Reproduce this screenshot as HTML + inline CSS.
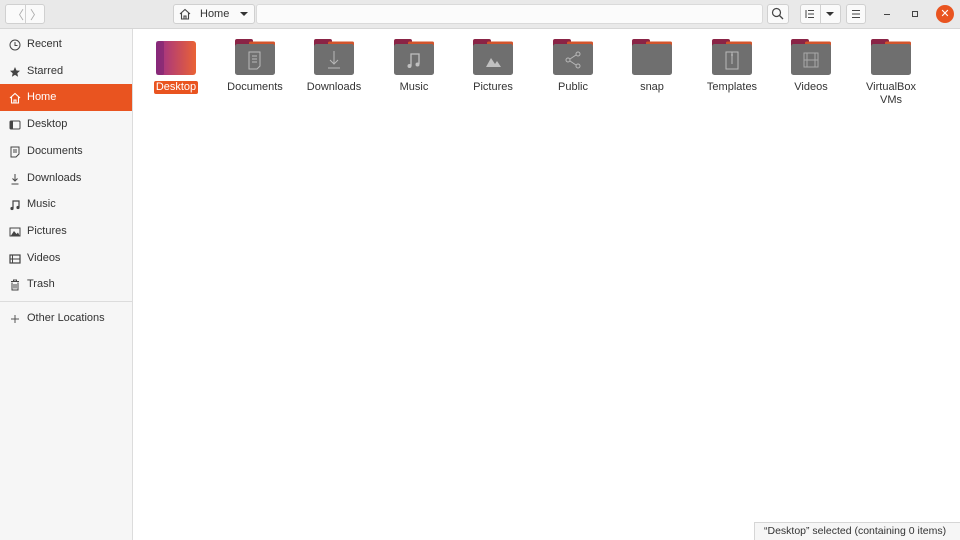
<!DOCTYPE html>
<html><head><style>
*{margin:0;padding:0;box-sizing:border-box}
body{width:960px;height:540px;overflow:hidden;background:#fff;font-family:"Liberation Sans","DejaVu Sans",sans-serif;font-size:11px;color:#333;position:relative}
.hdr{position:absolute;left:0;top:0;width:960px;height:29px;background:#e9e9e9;border-bottom:1px solid #d6d6d6}
.btn{position:absolute;background:#fafafa;border:1px solid #d0d0d0;border-radius:3px}
.side{position:absolute;left:0;top:29px;width:133px;height:511px;background:#f6f6f6;border-right:1px solid #dcdcdc}
.it{position:absolute;left:0;width:132px;height:26px;line-height:27px;padding-left:27px;font-size:11px;color:#333}
.it svg{position:absolute;left:9px;top:8px}
.sel{background:#e95420;color:#fff}
.f{position:absolute;top:38px;width:80px;text-align:center}
.f svg{display:block;margin:0 auto}
.f span{display:inline-block;margin-top:5px;font-size:11px;color:#333;line-height:13px;padding:0 2px}
.status{position:absolute;left:754px;top:522px;width:206px;height:18px;background:#f6f6f6;border:1px solid #d6d6d6;border-right:none;border-bottom:none;font-size:10.5px;line-height:17px;padding-left:9px;color:#333}
</style></head><body>
<div class="hdr">
 <div class="btn" style="left:5px;top:4px;width:40px;height:20px"></div>
 <div style="position:absolute;left:25px;top:4px;width:1px;height:20px;background:#d0d0d0"></div>
 <div style="position:absolute;left:12px;top:6px;color:#aaa;font-size:12px">〈</div>
 <div style="position:absolute;left:30px;top:6px;color:#aaa;font-size:12px">〉</div>
 <div class="btn" style="left:173px;top:4px;width:82px;height:20px"></div>
 <svg style="position:absolute;left:179px;top:8px" width="12" height="12" viewBox="0 0 12 12"><path d="M1 6 L6 1.5 L11 6 M2.5 5 V11 H9.5 V5 M5 11 V8 H7 V11" fill="none" stroke="#444" stroke-width="1.1"/></svg>
 <div style="position:absolute;left:200px;top:8px;font-size:11px;color:#333">Home</div>
 <div style="position:absolute;left:240px;top:12px;border:4px solid transparent;border-top:4px solid #333"></div>
 <div class="btn" style="left:256px;top:4px;width:507px;height:20px;background:#fbfbfb;border-color:#dadada"></div>
 <div class="btn" style="left:767px;top:4px;width:22px;height:20px"></div>
 <svg style="position:absolute;left:771px;top:7px" width="13" height="13" viewBox="0 0 13 13"><circle cx="5.5" cy="5.5" r="4" fill="none" stroke="#444" stroke-width="1.2"/><path d="M8.5 8.5 L12 12" stroke="#444" stroke-width="1.3"/></svg>
 <div class="btn" style="left:800px;top:4px;width:41px;height:20px"></div>
 <div style="position:absolute;left:820px;top:4px;width:1px;height:20px;background:#d0d0d0"></div>
 <svg style="position:absolute;left:805px;top:9px" width="10" height="10" viewBox="0 0 10 10"><path d="M1 1V9 M3 1.5H9 M3 5H9 M3 8.5H9" stroke="#444" stroke-width="1"/></svg>
 <div style="position:absolute;left:826px;top:12px;border:4px solid transparent;border-top:4px solid #333"></div>
 <div class="btn" style="left:846px;top:4px;width:20px;height:20px"></div>
 <svg style="position:absolute;left:851px;top:9px" width="10" height="10" viewBox="0 0 10 10"><path d="M1 1.5H9 M1 5H9 M1 8.5H9" stroke="#444" stroke-width="1"/></svg>
 <div style="position:absolute;left:884px;top:14px;width:6px;height:1px;background:#444"></div>
 <div style="position:absolute;left:912px;top:11px;width:6px;height:6px;border:1px solid #444"></div>
 <div style="position:absolute;left:936px;top:5px;width:18px;height:18px;border-radius:50%;background:#e95420;color:#fff;text-align:center;line-height:18px;font-size:11px">✕</div>
</div>
<div class="side">
 <div class="it" style="top:2px"><svg width="12" height="12" viewBox="0 0 12 12"><circle cx="6" cy="6" r="5" fill="none" stroke="#444"/><path d="M6 3V6.5H8.5" fill="none" stroke="#444"/></svg>Recent</div>
 <div class="it" style="top:29px"><svg width="12" height="12" viewBox="0 0 12 12"><path d="M6 1 L7.5 4.5 L11 4.8 L8.3 7.2 L9.1 10.8 L6 8.9 L2.9 10.8 L3.7 7.2 L1 4.8 L4.5 4.5Z" fill="#444"/></svg>Starred</div>
 <div class="it sel" style="top:55px;height:27px"><svg width="12" height="12" viewBox="0 0 12 12"><path d="M1 6 L6 1.5 L11 6 M2.5 5 V11 H9.5 V5 M5 11 V8 H7 V11" fill="none" stroke="#fff" stroke-width="1.1"/></svg>Home</div>
 <div class="it" style="top:82px"><svg width="12" height="12" viewBox="0 0 12 12"><rect x="1" y="2" width="10" height="8" rx="1" fill="none" stroke="#444"/><rect x="1" y="2" width="3" height="8" fill="#444"/></svg>Desktop</div>
 <div class="it" style="top:109px"><svg width="12" height="12" viewBox="0 0 12 12"><path d="M2 1H10V8L7 11H2Z M4 4H8 M4 6H8" fill="none" stroke="#444"/></svg>Documents</div>
 <div class="it" style="top:136px"><svg width="12" height="12" viewBox="0 0 12 12"><path d="M6 1V8 M3.5 5.5L6 8L8.5 5.5 M2.5 11H9.5" fill="none" stroke="#444"/></svg>Downloads</div>
 <div class="it" style="top:162px"><svg width="12" height="12" viewBox="0 0 12 12"><path d="M4 9V2H10V8" fill="none" stroke="#444" stroke-width="1.2"/><circle cx="3" cy="9.5" r="1.6" fill="#444"/><circle cx="9" cy="8.5" r="1.6" fill="#444"/></svg>Music</div>
 <div class="it" style="top:189px"><svg width="12" height="12" viewBox="0 0 12 12"><rect x="1" y="2" width="10" height="8" fill="none" stroke="#444"/><path d="M2 9.5L5 5L7.5 8L9 6.5L10.5 9.5Z" fill="#444"/></svg>Pictures</div>
 <div class="it" style="top:216px"><svg width="12" height="12" viewBox="0 0 12 12"><rect x="1" y="2" width="10" height="8" fill="none" stroke="#444" stroke-width="1.2"/><path d="M1 6H11 M3.5 2V10" stroke="#444"/></svg>Videos</div>
 <div class="it" style="top:242px"><svg width="12" height="12" viewBox="0 0 12 12"><path d="M2 2.5H10 M4.5 2.5V1H7.5V2.5 M3 3.5V11H9V3.5 M5 5V9.5 M7 5V9.5" fill="none" stroke="#444"/></svg>Trash</div>
 <div style="position:absolute;left:0;top:272px;width:132px;height:1px;background:#dcdcdc"></div>
 <div class="it" style="top:276px"><svg width="12" height="12" viewBox="0 0 12 12"><path d="M6 2V10 M2 6H10" stroke="#555"/></svg>Other Locations</div>
</div>

<svg width="0" height="0" style="position:absolute"><defs>
<linearGradient id="dg" x1="0" x2="1"><stop offset="0" stop-color="#9b2e8c"/><stop offset="1" stop-color="#ea6235"/></linearGradient>
<g id="fold"><rect x="0" y="1" width="18" height="10" rx="2" fill="#8a2446"/><rect x="14" y="3.5" width="26" height="5" rx="1.5" fill="#d2542c"/><rect x="0" y="6" width="40" height="31" rx="2.5" fill="#6f6f6f"/></g>
</defs></svg>

<div class="f" style="left:136px"><svg width="40" height="38" viewBox="0 0 40 38"><rect x="0" y="3" width="40" height="34" rx="3" fill="url(#dg)"/><rect x="0" y="3" width="8" height="34" rx="2" fill="#7a2470" opacity=".6"/></svg><span style="background:#e95420;color:#fff;border-radius:2px">Desktop</span></div>
<div class="f" style="left:215px"><svg width="40" height="38"><use href="#fold"/><path d="M14 14H25V28L22 31H14Z M17 18H22 M17 21H22 M17 24H22" fill="none" stroke="#b8b8b8"/></svg><span>Documents</span></div>
<div class="f" style="left:294px"><svg width="40" height="38"><use href="#fold"/><path d="M20 13V26 M16 22L20 26L24 22 M14 30H26" fill="none" stroke="#b8b8b8"/></svg><span>Downloads</span></div>
<div class="f" style="left:374px"><svg width="40" height="38"><use href="#fold"/><path d="M17 28V16H25V26" fill="none" stroke="#c0c0c0" stroke-width="1.3"/><circle cx="15.5" cy="28" r="2" fill="#c0c0c0"/><circle cx="23.5" cy="26.5" r="2" fill="#c0c0c0"/></svg><span>Music</span></div>
<div class="f" style="left:453px"><svg width="40" height="38"><use href="#fold"/><path d="M13 29L18 20L22 26L24 23L28 29Z" fill="#c0c0c0"/></svg><span>Pictures</span></div>
<div class="f" style="left:533px"><svg width="40" height="38"><use href="#fold"/><circle cx="15" cy="22" r="2" fill="none" stroke="#b8b8b8"/><circle cx="25" cy="16" r="2" fill="none" stroke="#b8b8b8"/><circle cx="25" cy="28" r="2" fill="none" stroke="#b8b8b8"/><path d="M17 21L23 17 M17 23L23 27" stroke="#b8b8b8"/></svg><span>Public</span></div>
<div class="f" style="left:612px"><svg width="40" height="38"><use href="#fold"/></svg><span>snap</span></div>
<div class="f" style="left:692px"><svg width="40" height="38"><use href="#fold"/><path d="M14 14H26V31H14Z M20 14V26 M19 17H21" fill="none" stroke="#b8b8b8"/></svg><span>Templates</span></div>
<div class="f" style="left:771px"><svg width="40" height="38"><use href="#fold"/><path d="M13 15H27V29H13Z M16 15V29 M24 15V29 M13 22H27" fill="none" stroke="#a8a8a8"/></svg><span>Videos</span></div>
<div class="f" style="left:851px"><svg width="40" height="38"><use href="#fold"/></svg><span>VirtualBox<br>VMs</span></div>

<div class="status">“Desktop” selected  (containing 0 items)</div>
</body></html>
